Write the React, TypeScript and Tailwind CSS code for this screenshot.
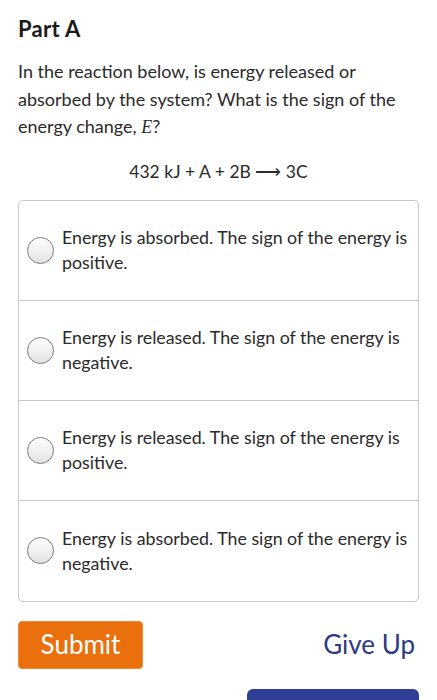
import React, { useState } from 'react';

const OPTIONS: string[] = [
  'Energy is absorbed. The sign of the energy is positive.',
  'Energy is released. The sign of the energy is negative.',
  'Energy is released. The sign of the energy is positive.',
  'Energy is absorbed. The sign of the energy is negative.',
];

export default function App() {
  const [selected, setSelected] = useState<number | null>(null);

  return (
    <div className="min-h-[700px] overflow-hidden bg-white px-[18px] pt-[17px] text-[#222] [font-family:Lato,'Open_Sans',sans-serif]">
      {/* Header */}
      <h1 className="text-[22px] font-bold leading-6 tracking-[0.3px] text-[#1a1a1a]">Part A</h1>

      <p className="mt-[17px] text-[18px] leading-[27.5px] text-[#2a2a2a]">
        In the reaction below, is energy released or
        <br />
        absorbed by the system? What is the sign of the
        <br />
        energy change, <span className="italic [font-family:'Liberation_Serif',serif]">E</span>?
      </p>

      <p className="mt-[18px] text-center text-[17.5px] leading-6 text-[#2a2a2a]">
        432 kJ + A + 2B ⟶ 3C
      </p>

      {/* Options */}
      <div className="mt-[16px] overflow-hidden rounded-[5px] border border-[#c8c8c8]">
        {OPTIONS.map((opt, i) => (
          <button
            key={opt}
            type="button"
            onClick={() => setSelected(i)}
            className="flex h-[100px] w-full items-center gap-[8px] border-b border-[#c8c8c8] pl-[8px] pr-2 text-left last:border-b-0"
          >
            <span className="flex h-[27px] w-[27px] shrink-0 items-center justify-center rounded-full border border-[#7a7a7a] bg-gradient-to-b from-white to-[#e2e2e2]">
              {selected === i && <span className="h-[13px] w-[13px] rounded-full bg-[#3a4a9a]" />}
            </span>
            <span className="text-[17.8px] leading-[25px] text-[#2a2a2a]">{opt}</span>
          </button>
        ))}
      </div>

      {/* Footer */}
      <div className="mt-[19px] flex items-center justify-between">
        <button
          type="button"
          className="h-[48px] w-[125px] rounded-[4px] border border-[#f08a2c] bg-[#ea700d] text-[26px] text-white"
        >
          Submit
        </button>
        <button type="button" className="mr-[4px] text-[26px] text-[#2d3a86]">
          Give Up
        </button>
      </div>

      <div className="mt-[20px] flex justify-end">
        <div className="h-[20px] w-[172px] rounded-t-[6px] bg-[#2f3f95]" />
      </div>
    </div>
  );
}
